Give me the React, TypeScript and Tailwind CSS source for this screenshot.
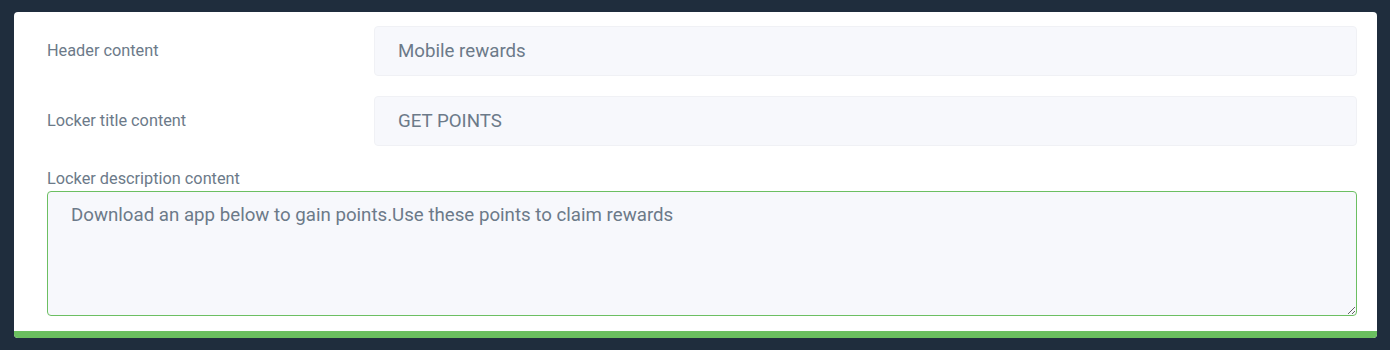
import { useState } from "react";

const rows = [
  { label: "Header content", value: "Mobile rewards" },
  { label: "Locker title content", value: "GET POINTS" },
];

const App = () => {
  const [desc, setDesc] = useState(
    "Download an app below to gain points.Use these points to claim rewards"
  );

  return (
    <div className="w-full h-[350px] bg-[#1f2d3d] pt-[12px] pl-[14px] pr-[13px] font-['Roboto',sans-serif]">
      <div className="bg-white rounded-[4px] overflow-hidden">
        <div className="pl-[33px] pr-[20px] pt-[14px] pb-[15px]">
          {rows.map((r) => (
            <div key={r.label} className="flex items-center mb-[20px]">
              <label className="w-[327px] shrink-0 text-[16.3px] text-[#6c7a89]">{r.label}</label>
              <input
                defaultValue={r.value}
                className="flex-1 h-[50px] rounded-[4px] bg-[#f7f8fc] border border-[#f0f1f5] px-[23px] text-[18.7px] text-[#6c7a89] outline-none"
              />
            </div>
          ))}
          <label className="block text-[16.3px] leading-[20px] text-[#6c7a89] pt-[3px] pb-[2px]">
            Locker description content
          </label>
          <textarea
            value={desc}
            onChange={(e) => setDesc(e.target.value)}
            className="block w-full h-[125px] rounded-[4px] bg-[#f7f8fc] border border-[#6cbf62] px-[23px] py-[10px] text-[18.7px] leading-[26px] text-[#6c7a89] outline-none"
          />
        </div>
        <div className="h-[7px] bg-[#6abf5f]" />
      </div>
    </div>
  );
};

export default App;
